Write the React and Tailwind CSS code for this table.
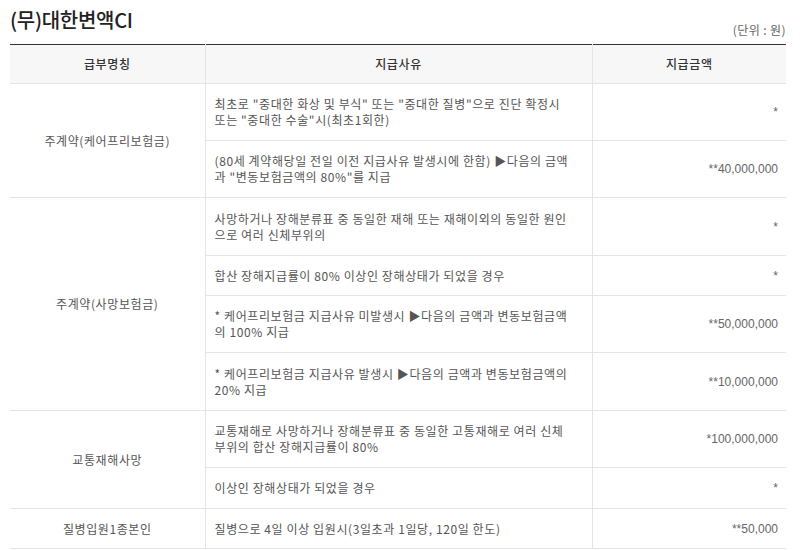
import React from 'react';

const font = { fontFamily: '"Noto Sans CJK KR", "Noto Sans", sans-serif' };

const groups = [
  {
    name: '주계약(케어프리보험금)',
    rows: [
      { reason: ['최초로 "중대한 화상 및 부식" 또는 "중대한 질병"으로 진단 확정시', '또는 "중대한 수술"시(최초1회한)'], amount: '*', h: 'h-[57px]' },
      { reason: ['(80세 계약해당일 전일 이전 지급사유 발생시에 한함) ▶다음의 금액', '과 "변동보험금액의 80%"를 지급'], amount: '**40,000,000', h: 'h-[57px]' },
    ],
  },
  {
    name: '주계약(사망보험금)',
    rows: [
      { reason: ['사망하거나 장해분류표 중 동일한 재해 또는 재해이외의 동일한 원인', '으로 여러 신체부위의'], amount: '*', h: 'h-[58px]' },
      { reason: ['합산 장해지급률이 80% 이상인 장해상태가 되었을 경우'], amount: '*', h: 'h-[40px]' },
      { reason: ['* 케어프리보험금 지급사유 미발생시 ▶다음의 금액과 변동보험금액', '의 100% 지급'], amount: '**50,000,000', h: 'h-[57px]' },
      { reason: ['* 케어프리보험금 지급사유 발생시 ▶다음의 금액과 변동보험금액의', '20% 지급'], amount: '**10,000,000', h: 'h-[58px]' },
    ],
  },
  {
    name: '교통재해사망',
    rows: [
      { reason: ['교통재해로 사망하거나 장해분류표 중 동일한 고통재해로 여러 신체', '부위의 합산 장해지급률이 80%'], amount: '*100,000,000', h: 'h-[57px]' },
      { reason: ['이상인 장해상태가 되었을 경우'], amount: '*', h: 'h-[41px]' },
    ],
  },
  {
    name: '질병입원1종본인',
    rows: [
      { reason: ['질병으로 4일 이상 입원시(3일초과 1일당, 120일 한도)'], amount: '**50,000', h: 'h-[40px]' },
    ],
  },
];

const App = () => {
  return (
    <div className="w-[800px] h-[550px] overflow-hidden bg-white px-[10px] pt-[6px] text-[#555]" style={font}>
      <div className="flex justify-between items-start w-[776px]">
        <h1 className="text-[20px] leading-[28px] font-medium text-[#222] tracking-[-0.3px]">(무)대한변액CI</h1>
        <span className="mt-[16px] text-[12px] leading-[16px] text-[#666] tracking-[0.4px]">(단위 : 원)</span>
      </div>

      <table className="mt-[6px] w-[776px] table-fixed border-t border-[#333] text-[12px] leading-[16px] tracking-[0.6px]">
        <colgroup>
          <col className="w-[195px]" />
          <col className="w-[387px]" />
          <col className="w-[194px]" />
        </colgroup>
        <thead>
          <tr className="bg-[#f7f7f7] text-[#333] h-[39px]">
            <th className="font-medium border-b border-[#e4e4e4]">급부명칭</th>
            <th className="font-medium border-b border-l border-[#e4e4e4]">지급사유</th>
            <th className="font-medium border-b border-l border-[#e4e4e4]">지급금액</th>
          </tr>
        </thead>
        <tbody>
          {groups.map((g) =>
            g.rows.map((r, i) => (
              <tr key={g.name + i} className={r.h}>
                {i === 0 && (
                  <td rowSpan={g.rows.length} className="text-center border-b border-[#e4e4e4]">
                    {g.name}
                  </td>
                )}
                <td className="pl-[9px] border-b border-l border-[#e4e4e4] whitespace-nowrap">
                  {r.reason.map((line, k) => (
                    <div key={k}>{line}</div>
                  ))}
                </td>
                <td
                  className="pr-[8px] text-right text-[#666] tracking-normal border-b border-l border-[#e4e4e4]"
                  style={{ fontFamily: '"Liberation Sans", Arial, sans-serif' }}
                >
                  {r.amount}
                </td>
              </tr>
            ))
          )}
        </tbody>
      </table>
    </div>
  );
};

export default App;
